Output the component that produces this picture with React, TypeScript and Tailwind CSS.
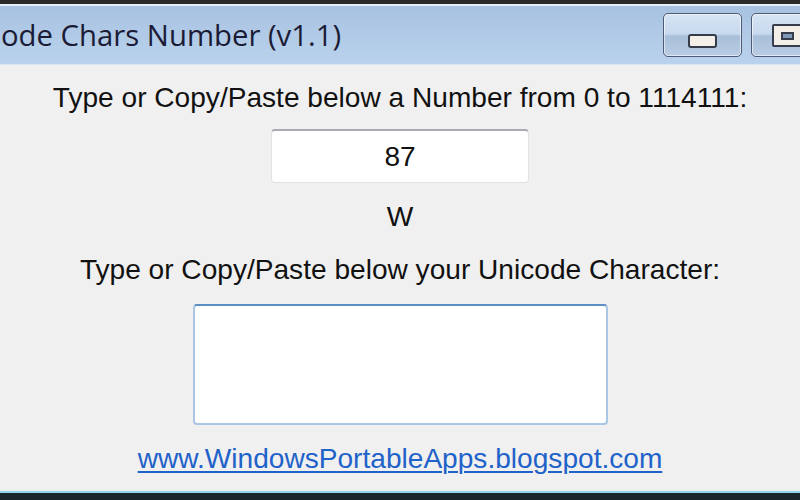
import React from 'react';

const TitleButton: React.FC<{ kind: 'min' | 'max' }> = ({ kind }) => (
  <div className="w-[79px] h-[44px] shrink-0 rounded-[5px] border border-[#4f5b72] bg-[linear-gradient(to_bottom,#d6e4f3_0%,#c8daee_47%,#a8bfd9_53%,#b9cde4_100%)] shadow-[inset_0_0_0_1px_rgba(255,255,255,0.55)] flex justify-center">
    {kind === 'min' ? (
      <div className="mt-[20px] w-[29px] h-[14px] rounded-[3px] border-2 border-[#363c4a] bg-[#f5efe9]" />
    ) : (
      <div className="mt-[10px] ml-[-6px] w-[31px] h-[23px] rounded-[2px] border-2 border-[#363c4a] bg-[#f3eee8] flex items-center justify-center">
        <div className="w-[13px] h-[8px] border-2 border-[#363c4a] bg-[#7f98b8]" />
      </div>
    )}
  </div>
);

export default function App() {
  return (
    <div className="w-[800px] h-[500px] overflow-hidden flex flex-col bg-[#f0f0f0] font-['Liberation_Sans',Arial,sans-serif]">
      <div className="h-[4px] bg-[#2a2a2a]" />
      <div className="h-[2px] bg-[#e6eef7]" />
      <div className="h-[59px] flex overflow-hidden bg-[linear-gradient(to_bottom,#a7c2e1,#bad2ec)] border-b border-[#dbe6f2]">
        <div className="w-[663px] shrink-0 pl-[1px] pt-[10px] text-[29.3px] leading-[38px] text-[#1b1b36] font-['Open_Sans','Noto_Sans',sans-serif] whitespace-nowrap overflow-hidden">
          ode Chars Number (v1.1)
        </div>
        <div className="flex gap-[9px] pt-[7px] shrink-0">
          <TitleButton kind="min" />
          <TitleButton kind="max" />
        </div>
      </div>

      <div className="flex-1 flex flex-col items-center text-[28.1px] leading-[32px] text-[#111]">
        <p className="mt-[17px] whitespace-nowrap">Type or Copy/Paste below a Number from 0 to 1114111:</p>
        <div className="mt-[15px] w-[258px] h-[54px] rounded-[4px] bg-white border border-[#e0e2e8] border-t-2 border-t-[#a9abb0] flex items-center justify-center">
          87
        </div>
        <p className="mt-[18px]">W</p>
        <p className="mt-[21px] whitespace-nowrap">Type or Copy/Paste below your Unicode Character:</p>
        <div className="mt-[18px] w-[415px] h-[121px] rounded-[4px] bg-white border-2 border-[#a9c6e4] border-t-[#5b8ec6]" />
        <a className="mt-[18px] whitespace-nowrap text-[#1f62c9] underline decoration-2 underline-offset-[3px]">
          www.WindowsPortableApps.blogspot.com
        </a>
      </div>

      <div className="h-[2px] bg-[#8fd6ec]" />
      <div className="h-[7px] bg-[#19262b]" />
    </div>
  );
}
